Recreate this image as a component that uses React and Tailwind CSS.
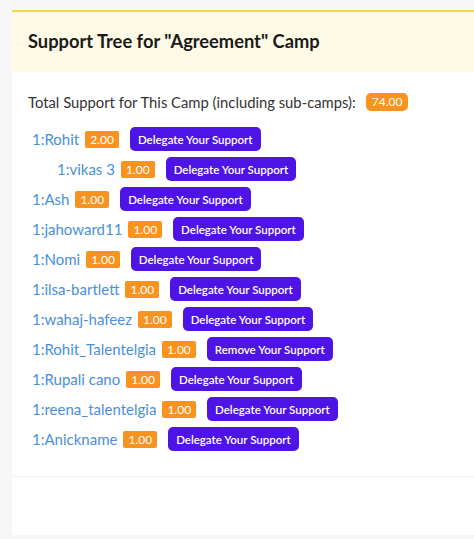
import React from "react";

const rows = [
  { name: "1:Rohit", value: "2.00", action: "Delegate Your Support" },
  { name: "1:vikas 3", value: "1.00", action: "Delegate Your Support", child: true },
  { name: "1:Ash", value: "1.00", action: "Delegate Your Support" },
  { name: "1:jahoward11", value: "1.00", action: "Delegate Your Support" },
  { name: "1:Nomi", value: "1.00", action: "Delegate Your Support" },
  { name: "1:ilsa-bartlett", value: "1.00", action: "Delegate Your Support" },
  { name: "1:wahaj-hafeez", value: "1.00", action: "Delegate Your Support" },
  { name: "1:Rohit_Talentelgia", value: "1.00", action: "Remove Your Support" },
  { name: "1:Rupali cano", value: "1.00", action: "Delegate Your Support" },
  { name: "1:reena_talentelgia", value: "1.00", action: "Delegate Your Support" },
  { name: "1:Anickname", value: "1.00", action: "Delegate Your Support" },
];

const SupportRow = ({ row }) => (
  <li className={`flex h-[30px] items-center ${row.child ? "pl-[25px]" : ""}`}>
    <a className="text-[15px] text-[#4a8fdc]" href="#">
      {row.name}
    </a>
    <span className="ml-[6px] rounded-[2px] bg-[#f7931e] px-[5px] text-[12px] leading-[17px] text-white">
      {row.value}
    </span>
    <button className="ml-[11px] h-[24px] rounded-[5px] bg-[#4e14e6] px-[8px] text-[11.5px] font-semibold text-white">
      {row.action}
    </button>
  </li>
);

export default function App() {
  return (
    <div
      className="min-h-[539px] bg-[#f7f7f8] pl-[12px] pt-[10px]"
      style={{ fontFamily: "Lato, 'Noto Sans', sans-serif" }}
    >
      <div className="min-h-[525px] bg-white">
        <div className="flex h-[62px] items-center border-t-2 border-[#f6d650] bg-[#fffae6] pl-[16px]">
          <h2 className="text-[18.3px] font-bold text-[#1a1a1a]">
            Support Tree for "Agreement" Camp
          </h2>
        </div>
        <div className="h-[405px] border-b border-[#f0f0f0] px-[16px] pt-[19px]">
          <p className="flex items-center text-[14.8px] text-[#333]">
            Total Support for This Camp (including sub-camps):
            <span className="ml-[10px] rounded-[5px] bg-[#f7931e] px-[6px] text-[12px] leading-[18px] text-white">
              74.00
            </span>
          </p>
          <ul className="mt-[11px] pl-[4px]">
            {rows.map((row) => (
              <SupportRow key={row.name} row={row} />
            ))}
          </ul>
        </div>
      </div>
    </div>
  );
}
